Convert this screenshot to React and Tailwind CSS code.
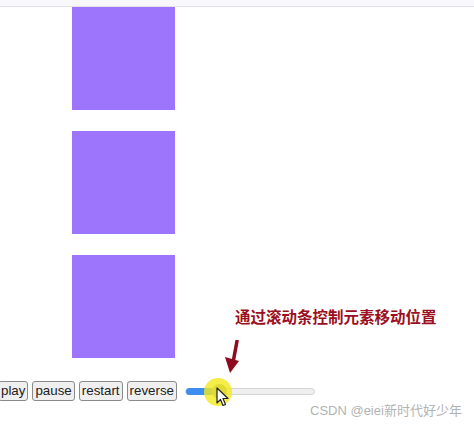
import React from "react";

const Box = () => <div className="w-[103px] h-[103px] bg-[#9d75fd]" />;

const Btn = ({ children }) => (
  <button className="h-[20px] px-[2px] border border-[#8a8a8a] rounded-[3px] bg-[#efefef] text-[13.33px] leading-none text-[#222] font-['Liberation_Sans',Arial,sans-serif]">
    {children}
  </button>
);

export default function App() {
  return (
    <div className="relative w-[474px] h-[424px] bg-white overflow-hidden font-['Liberation_Sans',Arial,sans-serif]">
      {/* browser strip */}
      <div className="h-[7px] bg-[#f8f7fa] border-b border-[#e4e2e8]" />

      <div className="flex flex-col gap-[21px] ml-[72px]">
        <Box />
        <Box />
        <Box />
      </div>

      <div className="flex items-center mt-[23px] -ml-[2px]">
        <div className="flex gap-[4px]">
          <Btn>play</Btn>
          <Btn>pause</Btn>
          <Btn>restart</Btn>
          <Btn>reverse</Btn>
        </div>
        <div className="relative ml-[8px] w-[130px] h-[7px] rounded-full bg-[#efefef] border border-[#d4d4d4]">
          <div className="absolute left-0 top-[-1px] h-[7px] w-[28px] rounded-full bg-[#3d8ef0]" />
          <div className="absolute left-[26px] top-[-5px] w-[15px] h-[15px] rounded-full bg-[#9a9a9a]" />
          {/* click highlight */}
          <div className="absolute left-[18px] top-[-11px] w-[28px] h-[28px] rounded-full bg-[#f2ea1c] opacity-[0.8]" />
          {/* cursor */}
          <svg className="absolute left-[30px] top-[-2px]" width="14" height="20" viewBox="0 0 14 20">
            <path d="M1 1 L1 16 L4.5 12.5 L7 18.5 L9.5 17.5 L7 11.5 L12 11.5 Z" fill="#fff" stroke="#222" strokeWidth="1.2" strokeLinejoin="round" />
          </svg>
        </div>
      </div>

      {/* annotation */}
      <div className="absolute left-[235px] top-[306px] text-[15.5px] font-bold text-[#9b0f22] font-['Noto_Sans_CJK_SC',sans-serif] leading-[20px]">
        通过滚动条控制元素移动位置
      </div>
      <svg className="absolute left-[221px] top-[340px]" width="20" height="34" viewBox="0 0 20 34">
        <path d="M16 1 L12.5 20" stroke="#8e0a1c" strokeWidth="3.5" strokeLinecap="round" />
        <path d="M4 17 L18 21 L9 33 Z" fill="#8e0a1c" />
      </svg>

      <div className="absolute left-[310px] top-[401px] text-[13px] text-[#b3b3b3] font-['Liberation_Sans','Noto_Sans_CJK_SC',sans-serif]">
        CSDN @eiei新时代好少年
      </div>
    </div>
  );
}
